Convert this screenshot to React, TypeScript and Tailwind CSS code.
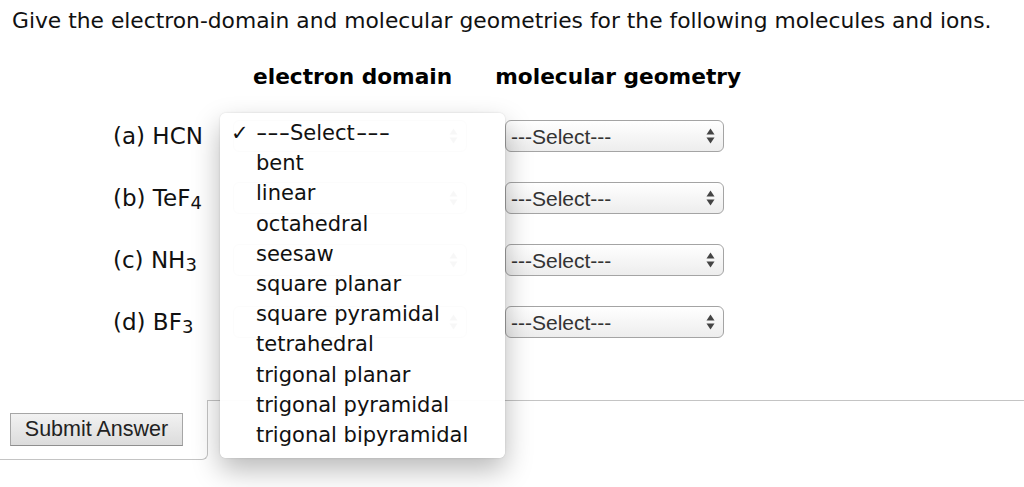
import * as React from 'react';

const options = [
  '---Select---',
  'bent',
  'linear',
  'octahedral',
  'seesaw',
  'square planar',
  'square pyramidal',
  'tetrahedral',
  'trigonal planar',
  'trigonal pyramidal',
  'trigonal bipyramidal',
];

const rows: { tag: string; base: string; sub?: string }[] = [
  { tag: '(a)', base: 'HCN' },
  { tag: '(b)', base: 'TeF', sub: '4' },
  { tag: '(c)', base: 'NH', sub: '3' },
  { tag: '(d)', base: 'BF', sub: '3' },
];

function Arrows() {
  return (
    <svg width="9" height="16" viewBox="0 0 9 16" className="shrink-0">
      <path d="M4.5 0.5 L8.5 6.5 L0.5 6.5 Z" fill="#444" />
      <path d="M0.5 9.5 L8.5 9.5 L4.5 15.5 Z" fill="#444" />
    </svg>
  );
}

function FakeSelect({ width, covered }: { width: string; covered?: boolean }) {
  return (
    <div
      className={`${width} h-[32px] flex items-center justify-between pl-[5px] pr-[8px] rounded-[6px] border border-[#a4a4a4] bg-gradient-to-b from-white to-[#ededed] text-[21px] text-[#333] font-['Liberation_Sans',Arial,sans-serif]`}
    >
      <span className={`leading-none ${covered ? 'invisible' : ''}`}>---Select---</span>
      <Arrows />
    </div>
  );
}

function Dashes() {
  return (
    <span className="inline-block w-[34px] overflow-visible">
      <span className="inline-block scale-x-[1.5] origin-left">---</span>
    </span>
  );
}

export default function App() {
  return (
    <div className="relative w-[1024px] h-[487px] bg-white overflow-hidden text-[#111] font-['DejaVu_Sans',Verdana,sans-serif]">
      <p className="pl-3 pt-[7px] text-[21.8px] leading-[27px] whitespace-nowrap">
        Give the electron-domain and molecular geometries for the following molecules and ions.
      </p>

      <div className="mt-[30px] h-[26px] flex text-[21.7px] leading-[26px] font-bold text-black">
        <span className="ml-[253px]">electron domain</span>
        <span className="ml-[43px]">molecular geometry</span>
      </div>

      <div className="mt-[15px]">
        {rows.map((r) => (
          <div key={r.tag} className="h-[62px] flex items-center">
            <div className="ml-[113px] w-[120px] text-[23px] leading-[26px] whitespace-nowrap">
              {r.tag} {r.base}
              {r.sub && <sub className="text-[18px] relative top-[3px]">{r.sub}</sub>}
            </div>
            <FakeSelect width="w-[234px]" covered />
            <div className="ml-[38px]">
              <FakeSelect width="w-[219px]" />
            </div>
          </div>
        ))}
      </div>

      <div className="mt-[47px] flex">
        <div className="w-[208px] h-[60px] border-r border-b border-[#c4c4c4] rounded-br-[6px] pt-[13px] pl-[10px]">
          <button className="w-[173px] h-[33px] border border-[#a6a6a6] border-b-[#8f8f8f] bg-gradient-to-b from-[#f2f2f2] to-[#dcdcdc] text-[21.5px] leading-none text-[#222] font-['Liberation_Sans',Arial,sans-serif]">
            Submit Answer
          </button>
        </div>
        <div className="flex-1 border-t border-[#c4c4c4]" />
      </div>

      <div className="absolute left-[220px] top-[113px] w-[285px] h-[345px] rounded-[6px] bg-white/[0.96] shadow-[0_12px_28px_rgba(0,0,0,0.28),0_0_2px_rgba(0,0,0,0.15)] pt-[5px]">
        {options.map((o, i) => (
          <div key={o} className="relative h-[30.2px] pl-[36px] text-[21px] leading-[30px] text-[#111] whitespace-nowrap">
            {i === 0 ? (
              <>
                <span className="absolute left-[11px] top-0">✓</span>
                <Dashes />Select<span className="ml-[1px]"><Dashes /></span>
              </>
            ) : (
              o
            )}
          </div>
        ))}
      </div>
    </div>
  );
}
